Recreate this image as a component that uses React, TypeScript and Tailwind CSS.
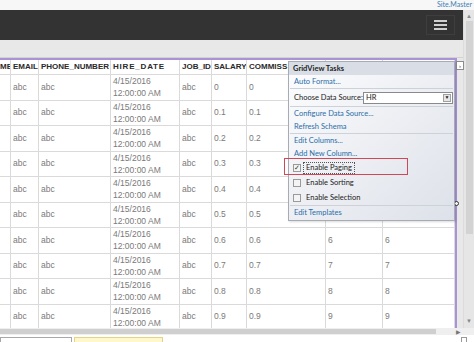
const rows = Array.from({ length: 10 }, (_, i) => i);

const cols = 'grid grid-cols-[11px_28px_72px_69px_32px_35px_79px_57px_72px]';
const cell = 'border-r border-b border-[#dadada] pl-[2px] flex items-center overflow-hidden whitespace-nowrap';

const TaskLink = ({ children }: { children: React.ReactNode }) => (
  <div className="h-[13px] flex items-center pl-[5px] text-[#2b6ea8]">{children}</div>
);

const TaskCheck = ({ label, checked, focus }: { label: string; checked?: boolean; focus?: boolean }) => (
  <div className="h-[15px] flex items-center pl-[4px] gap-[2px] text-[#222]">
    <span className="w-[8px] h-[8px] border border-[#9a9a9a] bg-[#f4f4f4] flex items-center justify-center text-[7px] leading-none text-[#333]">
      {checked ? '✓' : ''}
    </span>
    <span className={focus ? 'border border-dotted border-[#555] px-[2px] leading-[10px]' : 'px-[3px]'}>{label}</span>
  </div>
);

const Sep = () => <div className="h-px bg-[#cdd1d8] mx-[1px]" />;

export default function App() {
  return (
    <div className="relative w-[474px] h-[342px] overflow-hidden bg-white font-['Liberation_Sans',Arial,sans-serif]">
      {/* top strip */}
      <div className="h-[10px] flex justify-end items-start pr-[2px] bg-[#f7f7f7]">
        <span className="text-[7px] leading-[8px] text-[#3f7fb5] font-['Lato',sans-serif]">Site.Master</span>
      </div>

      <div className="flex h-[318px]">
        {/* main design surface */}
        <div className="w-[463px] flex flex-col bg-[#e8e8e8]">
          <div className="h-[30px] bg-[#333333] flex items-center justify-end pr-[8px]">
            <div className="w-[29px] h-[20px] border border-[#3e3e3e] flex flex-col items-center justify-center gap-[2px]">
              <span className="block w-[13px] h-[2px] bg-[#d0d0d0]" />
              <span className="block w-[13px] h-[2px] bg-[#d0d0d0]" />
              <span className="block w-[13px] h-[2px] bg-[#d0d0d0]" />
            </div>
          </div>
          <div className="h-[18px] border-b border-[#d2d2d2]" />
          <div className="flex-1 overflow-hidden w-[457px] border-t-2 border-r-2 border-[#a993d6] bg-white text-[8.5px]">
            <div className={`${cols} h-[15px] font-bold text-[8px] text-[#2a2a2a]`}>
              {['ME', 'EMAIL', 'PHONE_NUMBER', 'HIRE_DATE', 'JOB_ID', 'SALARY', 'COMMISS', '', ''].map((h, i) => (
                <div key={i} className={`${cell} ${i === 0 ? '!pl-0' : ''} ${h === 'HIRE_DATE' ? 'tracking-[0.8px]' : ''}`}>{h}</div>
              ))}
            </div>
            {rows.map((i) => {
              const dec = i === 0 ? '0' : `0.${i}`;
              // the tasks panel sits over the last two columns of the first rows
              const hidden = i < 6;
              return (
                <div key={i} className={`${cols} h-[25.5px] text-[#7a7a7a]`}>
                  <div className={cell} />
                  <div className={cell}>abc</div>
                  <div className={cell}>abc</div>
                  <div className={`${cell} flex-col !items-start justify-center leading-[12px]`}>
                    <span>4/15/2016</span>
                    <span>12:00:00 AM</span>
                  </div>
                  <div className={cell}>abc</div>
                  <div className={cell}>{dec}</div>
                  <div className={cell}>{dec}</div>
                  <div className={cell}>{hidden ? '' : i}</div>
                  <div className={cell}>{hidden ? '' : i}</div>
                </div>
              );
            })}
          </div>
        </div>

        {/* vertical scrollbar */}
        <div className="w-[11px] bg-[#e6e6e6] flex flex-col items-center border-l border-[#dcdcdc]">
          <span className="text-[6px] leading-[8px] text-[#888] mt-[2px]">▲</span>
          <div className="w-[7px] h-[213px] bg-[#d3d3d3] mt-[1px]" />
          <div className="flex-1" />
          <span className="text-[6px] leading-[8px] text-[#888] mb-[3px]">▼</span>
        </div>
      </div>

      {/* horizontal scrollbar */}
      <div className="h-[7px] flex items-center bg-[#efefef]">
        <div className="w-[436px] h-[5px] bg-[#cfcfcf]" />
        <div className="flex-1 flex justify-end pr-[13px]">
          <span className="text-[6px] leading-[6px] text-[#777]">▶</span>
        </div>
      </div>

      {/* bottom tabs */}
      <div className="h-[7px] flex items-end gap-[2px] bg-white">
        <div className="w-[72px] h-[5px] border border-b-0 border-[#a8a8a8] bg-white" />
        <div className="w-[89px] h-[5px] border border-b-0 border-[#e2d48a] bg-[#fdf7c9]" />
        <div className="flex-1" />
        <div className="w-[6px] h-[5px] border border-b-0 border-[#999] mr-[7px]" />
      </div>

      {/* smart tag glyph */}
      <div className="absolute left-[456px] top-[61px] w-[8px] h-[9px] border border-[#8c8c8c] bg-white flex items-center justify-center text-[6px] leading-none text-[#444]">
        ›
      </div>
      {/* resize handle */}
      <div className="absolute left-[454px] top-[201px] w-[5px] h-[5px] rounded-full border border-[#333] bg-white" />

      {/* GridView Tasks panel */}
      <div className="absolute left-[288px] top-[61px] w-[167px] h-[160px] border border-[#a7abb3] bg-gradient-to-br from-[#fdfdfe] to-[#dde1e9] text-[7.5px] whitespace-nowrap font-['Lato',sans-serif] shadow-[1px_1px_2px_rgba(0,0,0,0.15)]">
        <div className="h-[13px] flex items-center pl-[4px] bg-[#d9dee6] font-bold text-[#1e1e1e]">GridView Tasks</div>
        <TaskLink>Auto Format...</TaskLink>
        <Sep />
        <div className="h-[17px] flex items-center pl-[5px] text-[#222]">
          <span className="w-[69px]">Choose Data Source:</span>
          <div className="w-[90px] h-[12px] border border-[#8a8a8a] bg-white flex items-center">
            <span className="flex-1 pl-[2px]">HR</span>
            <span className="w-[8px] h-[8px] mr-[1px] border border-[#a0a0a0] bg-[#e6e6e6] flex items-center justify-center text-[5px] leading-none">▼</span>
          </div>
        </div>
        <Sep />
        <TaskLink>Configure Data Source...</TaskLink>
        <TaskLink>Refresh Schema</TaskLink>
        <Sep />
        <TaskLink>Edit Columns...</TaskLink>
        <TaskLink>Add New Column...</TaskLink>
        <TaskCheck label="Enable Paging" checked focus />
        <TaskCheck label="Enable Sorting" />
        <TaskCheck label="Enable Selection" />
        <Sep />
        <TaskLink>Edit Templates</TaskLink>
      </div>

      {/* red highlight */}
      <div className="absolute left-[284px] top-[158px] w-[124px] h-[17px] border border-[#d0475a]" />
    </div>
  );
}
